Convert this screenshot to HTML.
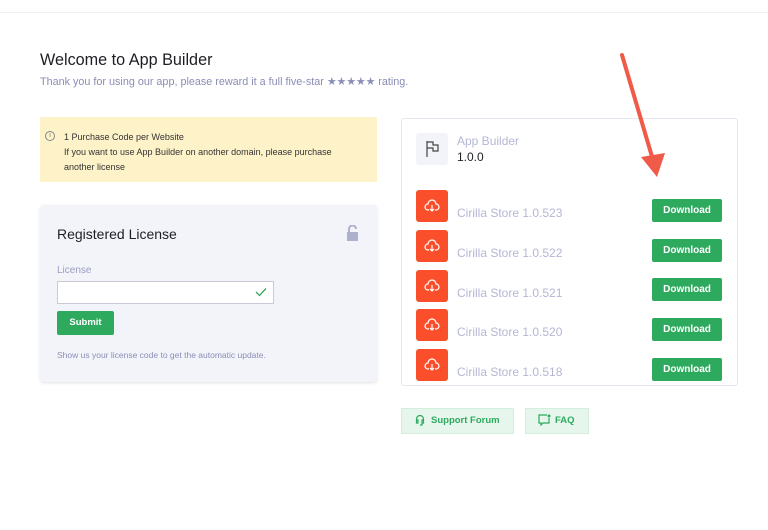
<!DOCTYPE html>
<html><head><style>
*{box-sizing:border-box;margin:0;padding:0}
body{width:768px;height:530px;background:#fff;font-family:"Liberation Sans",sans-serif;position:relative;overflow:hidden}
.a{position:absolute}
.dl{position:absolute;left:652px;width:70px;height:23px;background:#2eaa5e;border-radius:2px;color:#fff;font-size:10px;font-weight:bold;text-align:center;line-height:23px}
.ic{position:absolute;left:416px;width:32px;height:32px;background:#fb4f2c;border-radius:3px}
.ic svg{position:absolute;left:8px;top:9px}
.nm{position:absolute;left:457px;font-size:12px;color:#b4b7d3}
</style></head><body>
<div class="a" style="left:0;top:12px;width:768px;height:1px;background:#f0f1f5"></div>
<div class="a" style="left:40px;top:51px;font-size:16.2px;color:#1e1e24">Welcome to App Builder</div>
<div class="a" style="left:40px;top:75px;font-size:10.8px;color:#8a8db5">Thank you for using our app, please reward it a full five-star ★★★★★ rating.</div>

<div class="a" style="left:40px;top:117px;width:337px;height:65px;background:#fdf2c8"></div>
<div class="a" style="left:45px;top:131px;width:10px;height:10px;border:1px solid #888;border-radius:50%;font-size:7px;line-height:8px;text-align:center;color:#777">i</div>
<div class="a" style="left:64px;top:130px;font-size:9px;color:#333;line-height:15px">1 Purchase Code per Website<br>If you want to use App Builder on another domain, please purchase<br>another license</div>

<div class="a" style="left:40px;top:205px;width:337px;height:177px;background:#f3f4fa;border-radius:4px;box-shadow:0 1px 3px rgba(0,0,0,.12)"></div>
<div class="a" style="left:57px;top:226px;font-size:14px;color:#1e1e24">Registered License</div>
<svg class="a" style="left:346px;top:225px" width="13" height="16" viewBox="0 0 13 16"><path d="M3 7V4a3.5 3.5 0 0 1 7 0" fill="none" stroke="#aeb1cd" stroke-width="2"/><rect x="1" y="7" width="11" height="9" fill="#aeb1cd"/></svg>
<div class="a" style="left:57px;top:265px;font-size:10px;color:#9a9dc0">License</div>
<div class="a" style="left:57px;top:281px;width:217px;height:23px;background:#fff;border:1px solid #c9cad3"></div>
<svg class="a" style="left:255px;top:287px" width="12" height="10"><path d="M1 5l3.5 3.5L11 1.5" fill="none" stroke="#3aa85f" stroke-width="1.3"/></svg>
<div class="a" style="left:57px;top:311px;width:57px;height:24px;background:#2eaa5e;border-radius:2px;color:#fff;font-size:9.5px;font-weight:bold;text-align:center;line-height:24px">Submit</div>
<div class="a" style="left:57px;top:350px;font-size:8.5px;color:#8a8db5">Show us your license code to get the automatic update.</div>

<div class="a" style="left:401px;top:118px;width:337px;height:268px;border:1px solid #e6e7ee;border-radius:3px"></div>
<div class="a" style="left:416px;top:133px;width:32px;height:32px;background:#f3f4fa;border-radius:3px"></div>
<svg class="a" style="left:424px;top:140px" width="16" height="18"><path d="M3 1v16M3 2h6v3h5v6H9V8H3" fill="none" stroke="#444" stroke-width="1.2"/></svg>
<div class="a" style="left:457px;top:134px;font-size:12px;color:#b4b7d3">App Builder</div>
<div class="a" style="left:457px;top:150px;font-size:12px;color:#1e1e24">1.0.0</div>

<div class="ic" style="top:190px"><svg width="16" height="14"><path d="M5 11H4a3 3 0 0 1 0-6 4 4 0 0 1 8 0 3 3 0 0 1 0 6h-1M8 6v6M6 10l2 2 2-2" fill="none" stroke="#fff" stroke-width="1.2"/></svg></div>
<div class="ic" style="top:230px"><svg width="16" height="14"><path d="M5 11H4a3 3 0 0 1 0-6 4 4 0 0 1 8 0 3 3 0 0 1 0 6h-1M8 6v6M6 10l2 2 2-2" fill="none" stroke="#fff" stroke-width="1.2"/></svg></div>
<div class="ic" style="top:270px"><svg width="16" height="14"><path d="M5 11H4a3 3 0 0 1 0-6 4 4 0 0 1 8 0 3 3 0 0 1 0 6h-1M8 6v6M6 10l2 2 2-2" fill="none" stroke="#fff" stroke-width="1.2"/></svg></div>
<div class="ic" style="top:309px"><svg width="16" height="14"><path d="M5 11H4a3 3 0 0 1 0-6 4 4 0 0 1 8 0 3 3 0 0 1 0 6h-1M8 6v6M6 10l2 2 2-2" fill="none" stroke="#fff" stroke-width="1.2"/></svg></div>
<div class="ic" style="top:349px"><svg width="16" height="14"><path d="M5 11H4a3 3 0 0 1 0-6 4 4 0 0 1 8 0 3 3 0 0 1 0 6h-1M8 6v6M6 10l2 2 2-2" fill="none" stroke="#fff" stroke-width="1.2"/></svg></div>
<div class="nm" style="top:206px">Cirilla Store 1.0.523</div>
<div class="nm" style="top:246px">Cirilla Store 1.0.522</div>
<div class="nm" style="top:286px">Cirilla Store 1.0.521</div>
<div class="nm" style="top:325px">Cirilla Store 1.0.520</div>
<div class="nm" style="top:365px">Cirilla Store 1.0.518</div>
<div class="dl" style="top:199px">Download</div>
<div class="dl" style="top:239px">Download</div>
<div class="dl" style="top:278px">Download</div>
<div class="dl" style="top:318px">Download</div>
<div class="dl" style="top:358px">Download</div>

<div class="a" style="left:401px;top:408px;width:113px;height:26px;background:#e6f6ec;border:1px solid #d3eedc;color:#2eaa5e;font-size:9.5px;font-weight:bold;line-height:24px;padding-left:29px">Support Forum</div>
<svg class="a" style="left:415px;top:414px" width="10" height="13"><path d="M1.5 7V5a3.5 3.5 0 0 1 7 0v2M1.5 6v3h1.5V6zM8.5 6v3H7V6zM7 9v2H5" fill="none" stroke="#2eaa5e" stroke-width="1.2"/></svg>
<div class="a" style="left:525px;top:408px;width:64px;height:26px;background:#e6f6ec;border:1px solid #d3eedc;color:#2eaa5e;font-size:9.5px;font-weight:bold;line-height:24px;padding-left:29px">FAQ</div>
<svg class="a" style="left:538px;top:414px" width="13" height="12"><path d="M9 1H1v8h2v2l2-2h6V4M4 5h.1M6 5h.1M8 5h.1" fill="none" stroke="#2eaa5e" stroke-width="1.2"/><circle cx="11" cy="2" r="1.5" fill="#2eaa5e"/></svg>

<svg class="a" style="left:0;top:0" width="768" height="530"><line x1="622" y1="55" x2="653" y2="160" stroke="#f05a48" stroke-width="4" stroke-linecap="round"/><path d="M641 157l16 20 8-24z" fill="#f05a48"/></svg>
</body></html>
